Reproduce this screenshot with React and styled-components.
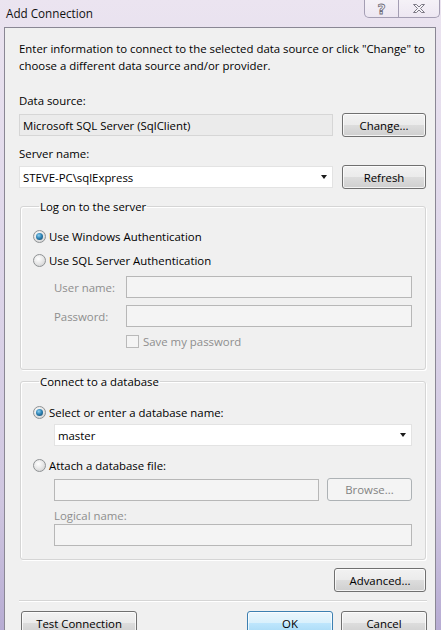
import React from "react";
import styled, { createGlobalStyle, css } from "styled-components";

const GlobalStyle = createGlobalStyle`
  html, body {
    margin: 0;
    padding: 0;
    background: #d9d1e6;
  }
`;

const UI_FONT = `"Open Sans", "Liberation Sans", sans-serif`;

const Window = styled.div`
  width: 441px;
  height: 630px;
  overflow: hidden;
  display: flex;
  flex-direction: column;
  font-family: ${UI_FONT};
  font-size: 11.4px;
  color: #000;
  background: linear-gradient(180deg, #ebe4f0 0%, #ddd5e9 45%, #cfc6e0 80%, #b7acd3 100%);
`;

const TitleBar = styled.div`
  height: 27px;
  flex: none;
  display: flex;
  align-items: flex-start;
  padding-left: 6px;
`;

const Title = styled.div`
  padding-top: 5px;
  line-height: 17px;
  font-size: 11.7px;
  color: #111;
`;

const CaptionButtons = styled.div`
  margin-left: auto;
  margin-right: 1px;
  display: flex;
  height: 17px;
  border: 1px solid #a49eb3;
  border-top: none;
  border-radius: 0 0 5px 5px;
  background: linear-gradient(180deg, rgba(255, 255, 255, 0.5), rgba(255, 255, 255, 0.15));
  overflow: hidden;
`;

const CaptionButton = styled.div`
  width: ${({ $wide }) => ($wide ? "40px" : "33px")};
  display: flex;
  align-items: center;
  justify-content: center;
  & + & {
    border-left: 1px solid #a49eb3;
  }
`;

const HelpGlyph = styled.span`
  font-family: "DejaVu Sans", sans-serif;
  font-size: 14px;
  font-weight: bold;
  line-height: 1;
  color: #f4f2f7;
  -webkit-text-stroke: 0.8px #6f6c78;
`;

const Client = styled.div`
  flex: 1;
  margin: 0 5px 0 4px;
  border: 1px solid #8a8794;
  border-bottom: none;
  background: #f0f0f0;
  padding: 12px 9px 0 14px;
  display: flex;
  flex-direction: column;
`;

const Intro = styled.p`
  margin: 0;
  line-height: 17px;
`;

const Label = styled.div`
  flex: none;
  width: ${({ $w }) => ($w ? `${$w}px` : "auto")};
  line-height: ${({ $tight }) => ($tight ? "15px" : "17px")};
  margin-top: ${({ $mt }) => $mt ?? 0}px;
  padding-left: ${({ $indent }) => $indent ?? 0}px;
  color: ${({ $disabled }) => ($disabled ? "#8e8e8e" : "#000")};
`;

const FieldRow = styled.div`
  display: flex;
  align-items: center;
  justify-content: ${({ $end }) => ($end ? "flex-end" : "flex-start")};
  gap: ${({ $gap }) => $gap ?? 9}px;
  margin-top: ${({ $mt }) => $mt ?? 0}px;
  padding-left: ${({ $indent }) => $indent ?? 0}px;
`;

const Box = styled.div`
  flex: 1;
  height: 22px;
  box-sizing: border-box;
  display: flex;
  align-items: center;
  padding: 0 3px;
  white-space: nowrap;
  ${({ $variant }) =>
    $variant === "readonly"
      ? css`
          background: #ebebeb;
          border: 1px solid #d6d6d6;
        `
      : $variant === "disabled"
      ? css`
          background: #f4f4f4;
          border: 1px solid #b7b7b7;
        `
      : css`
          background: #fff;
          border: 1px solid #e3e3e3;
        `}
`;

const BoxText = styled.span`
  flex: 1;
`;

const DropArrow = styled.span`
  width: 0;
  height: 0;
  margin-right: 2px;
  border-left: 3.5px solid transparent;
  border-right: 3.5px solid transparent;
  border-top: 4px solid #1a1a1a;
`;

const Button = styled.div`
  flex: none;
  width: ${({ $w }) => $w || 84}px;
  height: ${({ $h }) => $h || 24}px;
  box-sizing: border-box;
  border-radius: 3px;
  display: flex;
  align-items: center;
  justify-content: center;
  ${({ $kind }) =>
    $kind === "default"
      ? css`
          border: 1px solid #3c7fb1;
          background: linear-gradient(180deg, #eaf6fd 0%, #d9f0fc 50%, #bee6fd 50%, #a7d9f5 100%);
          box-shadow: inset 0 0 0 1px rgba(255, 255, 255, 0.7);
        `
      : $kind === "disabled"
      ? css`
          border: 1px solid #adb2b5;
          background: #f4f4f4;
          color: #838383;
        `
      : css`
          border: 1px solid #707070;
          background: linear-gradient(180deg, #f2f2f2 0%, #ebebeb 50%, #dddddd 50%, #cfcfcf 100%);
          box-shadow: inset 0 0 0 1px rgba(255, 255, 255, 0.75);
        `}
`;

const Group = styled.fieldset`
  margin: ${({ $mt }) => $mt}px 0 0 1px;
  border: 1px solid #d5d5d5;
  box-shadow: inset 1px 1px 0 #fff, 1px 1px 0 #fff;
  border-radius: 3px;
  padding: ${({ $pt }) => $pt}px 13px ${({ $pb }) => $pb}px 12px;
  min-width: 0;
`;

const Legend = styled.legend`
  padding: 0 1px;
  margin-left: 6px;
  line-height: 17px;
`;

const Choice = styled.label`
  display: flex;
  align-items: center;
  gap: 3px;
  line-height: 17px;
  margin-top: ${({ $mt }) => $mt ?? 0}px;
`;

const Radio = styled.span`
  width: 13px;
  height: 13px;
  box-sizing: border-box;
  border-radius: 50%;
  border: 1px solid #8f9294;
  background: radial-gradient(circle at 40% 35%, #ffffff 0%, #e9e9e9 45%, #c9cacb 100%);
  display: flex;
  align-items: center;
  justify-content: center;
  &::after {
    content: "";
    display: ${({ $checked }) => ($checked ? "block" : "none")};
    width: 7px;
    height: 7px;
    border-radius: 50%;
    background: radial-gradient(circle at 40% 35%, #8fd0f0 0%, #2f84b6 45%, #0f3d5c 100%);
  }
`;

const Check = styled.span`
  width: 13px;
  height: 13px;
  box-sizing: border-box;
  border: 1px solid #b9b9b9;
  background: #f4f4f4;
`;

const Separator = styled.div`
  height: 1px;
  margin: 8px -1px 0 0;
  background: #d5d5d5;
  border-bottom: 1px solid #fff;
`;

const Footer = styled.div`
  display: flex;
  align-items: flex-start;
  margin-top: 9px;
  margin-right: -1px;
  padding-left: 2px;
`;

const FooterRight = styled.div`
  margin-left: auto;
  display: flex;
  gap: 8px;
`;

const CloseIcon = () => (
  <svg width="14" height="11" viewBox="0 0 14 11">
    <path
      d="M1.5 1.5h3l2.5 2.5 2.5-2.5h3l-4 4 4 4h-3L7 7 4.5 9.5h-3l4-4z"
      fill="#f4f2f7"
      stroke="#6f6c78"
      strokeWidth="0.9"
      strokeLinejoin="round"
    />
  </svg>
);

const InputRow = ({ label }) => (
  <FieldRow $gap={0} $indent={21} $mt={7}>
    <Label $disabled $w={72}>
      {label}
    </Label>
    <Box $variant="disabled" />
  </FieldRow>
);

export default function App() {
  return (
    <>
      <GlobalStyle />
      <Window>
        <TitleBar>
          <Title>Add Connection</Title>
          <CaptionButtons>
            <CaptionButton>
              <HelpGlyph>?</HelpGlyph>
            </CaptionButton>
            <CaptionButton $wide>
              <CloseIcon />
            </CaptionButton>
          </CaptionButtons>
        </TitleBar>

        <Client>
          <Intro>
            Enter information to connect to the selected data source or click "Change" to
            <br />
            choose a different data source and/or provider.
          </Intro>

          <Label $mt={18}>Data source:</Label>
          <FieldRow $mt={4}>
            <Box $variant="readonly">
              <BoxText>Microsoft SQL Server (SqlClient)</BoxText>
            </Box>
            <Button>Change...</Button>
          </FieldRow>

          <Label $mt={8}>Server name:</Label>
          <FieldRow $mt={3}>
            <Box>
              <BoxText>STEVE-PC\sqlExpress</BoxText>
              <DropArrow />
            </Box>
            <Button>Refresh</Button>
          </FieldRow>

          <Group $mt={9} $pt={13} $pb={19}>
            <Legend>Log on to the server</Legend>
            <Choice>
              <Radio $checked />
              Use Windows Authentication
            </Choice>
            <Choice $mt={7}>
              <Radio />
              Use SQL Server Authentication
            </Choice>
            <InputRow label="User name:" />
            <InputRow label="Password:" />
            <FieldRow $gap={4} $indent={93} $mt={6}>
              <Check />
              <Label $disabled>Save my password</Label>
            </FieldRow>
          </Group>

          <Group $mt={3} $pt={14} $pb={13}>
            <Legend>Connect to a database</Legend>
            <Choice>
              <Radio $checked />
              Select or enter a database name:
            </Choice>
            <FieldRow $indent={21} $mt={3}>
              <Box>
                <BoxText>master</BoxText>
                <DropArrow />
              </Box>
            </FieldRow>
            <Choice $mt={11}>
              <Radio />
              Attach a database file:
            </Choice>
            <FieldRow $indent={21} $mt={4} $gap={8}>
              <Box $variant="disabled" />
              <Button $kind="disabled" $w={85} $h={23}>
                Browse...
              </Button>
            </FieldRow>
            <Label $tight $disabled $mt={7} $indent={21}>
              Logical name:
            </Label>
            <FieldRow $indent={21} $mt={1}>
              <Box $variant="disabled" />
            </FieldRow>
          </Group>

          <FieldRow $mt={8} $end>
            <Button $w={92}>Advanced...</Button>
          </FieldRow>

          <Separator />

          <Footer>
            <Button $w={116}>Test Connection</Button>
            <FooterRight>
              <Button $kind="default" $w={86}>
                OK
              </Button>
              <Button $w={86}>Cancel</Button>
            </FooterRight>
          </Footer>
        </Client>
      </Window>
    </>
  );
}
